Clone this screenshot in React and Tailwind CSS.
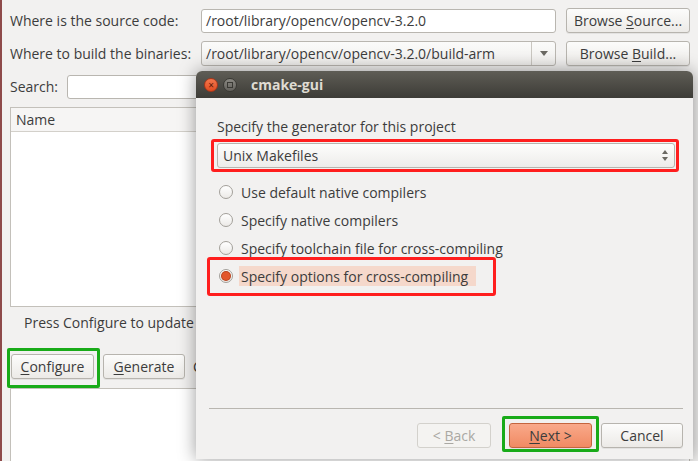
import React from 'react'

const font = { fontFamily: '"Open Sans", "Liberation Sans", Arial, sans-serif' }

function Btn({ children, className = '', disabled }) {
  return (
    <div
      className={
        'flex h-[25px] items-center justify-center whitespace-nowrap rounded-[3px] border text-[14px] ' +
        (disabled
          ? 'border-[#d3d1cc] bg-[#f4f3f1] text-[#aaa8a3] '
          : 'border-[#b7b4ae] bg-gradient-to-b from-[#fcfcfb] to-[#eceae7] text-[#3c3c3c] shadow-[0_1px_0_rgba(0,0,0,0.06)] ') +
        className
      }
    >
      {children}
    </div>
  )
}

function U({ children }) {
  return <span className="underline decoration-1 underline-offset-2">{children}</span>
}

function Radio({ checked, label, highlight }) {
  return (
    <div className="flex h-[28px] items-center">
      <div className="ml-[10px] flex h-[14px] w-[14px] items-center justify-center rounded-full border border-[#a3a09a] bg-gradient-to-b from-white to-[#eceae7]">
        {checked && <div className="h-[8px] w-[8px] rounded-full bg-[#e2562b] shadow-[0_0_0_1px_#b9431d]" />}
      </div>
      <div
        className={
          'ml-[6px] flex h-[20px] items-center whitespace-nowrap pl-[2px] pr-[8px] text-[14px] text-[#3c3c3c] ' +
          (highlight ? 'bg-[#f5d8cb]' : '')
        }
      >
        {label}
      </div>
    </div>
  )
}

export default function App() {
  return (
    <div
      className="relative h-[461px] w-[698px] overflow-hidden border-l-2 border-[#8e4a4a] bg-[#f2f1f0] text-[#3c3c3c]"
      style={font}
    >
      {/* main window */}
      <div className="flex flex-col pl-[8px] pr-[8px] pt-[8px]">
        <div className="flex h-[25px] items-center">
          <div className="w-[191px] whitespace-nowrap text-[14px]">Where is the source code:</div>
          <div className="flex h-[24px] w-[355px] items-center whitespace-nowrap rounded-[3px] border border-[#b9b6b0] bg-white pl-[4px] text-[14px]">
            /root/library/opencv/opencv-3.2.0
          </div>
          <Btn className="ml-[10px] w-[124px]">
            Browse&nbsp;<U>S</U>ource...
          </Btn>
        </div>
        <div className="mt-[8px] flex h-[25px] items-center">
          <div className="w-[191px] whitespace-nowrap text-[14px]">Where to build the binaries:</div>
          <div className="flex h-[25px] w-[355px] items-center rounded-[3px] border border-[#b9b6b0] bg-gradient-to-b from-[#fbfbfa] to-[#efeeec]">
            <div className="flex-1 whitespace-nowrap pl-[4px] text-[14px]">/root/library/opencv/opencv-3.2.0/build-arm</div>
            <div className="flex h-full w-[24px] items-center justify-center border-l border-[#c9c6c0]">
              <div className="h-0 w-0 border-x-[4px] border-t-[5px] border-x-transparent border-t-[#6b6963]" />
            </div>
          </div>
          <Btn className="ml-[10px] w-[124px]">
            Browse&nbsp;<U>B</U>uild...
          </Btn>
        </div>
        <div className="mt-[8px] flex h-[25px] items-center">
          <div className="w-[57px] text-[14px]">Search:</div>
          <div className="h-[24px] flex-1 rounded-[3px] border border-[#b9b6b0] bg-white" />
        </div>
        <div className="mt-[8px] flex h-[200px] flex-col border border-[#c3c0ba] bg-white">
          <div className="flex h-[24px] items-center border-b border-[#d3d0ca] bg-[#f6f5f4] pl-[5px] text-[14px]">
            Name
          </div>
        </div>
        <div className="mt-[6px] w-[440px] overflow-hidden whitespace-nowrap pl-[14px] text-[14px] leading-[20px]">
          Press Configure to update and display new values in red, then press Generate
        </div>
        <div className="mt-[21px] flex h-[25px] items-center">
          <Btn className="ml-[1px] w-[83px]">
            <U>C</U>onfigure
          </Btn>
          <Btn className="ml-[9px] w-[82px]">
            <U>G</U>enerate
          </Btn>
          <div className="ml-[8px] whitespace-nowrap text-[14px]">Current Generator: None</div>
        </div>
        <div className="mt-[9px] h-[80px] border border-[#c3c0ba] bg-white" />
      </div>

      {/* annotation: Configure */}
      <div className="absolute left-[5px] top-[348px] h-[40px] w-[93px] rounded-[2px] border-[3px] border-[#19ab19]" />

      {/* dialog window */}
      <div className="absolute left-[194px] top-[71px] flex h-[388px] w-[497px] flex-col overflow-hidden rounded-t-[6px] bg-[#f2f1f0] shadow-[0_0_18px_rgba(0,0,0,0.4)]">
        <div className="flex h-[27px] items-center bg-gradient-to-b from-[#5f5d56] to-[#3d3c37]">
          <div className="ml-[8px] flex h-[14px] w-[14px] items-center justify-center rounded-full border border-[#a8361a] bg-gradient-to-b from-[#f3764c] to-[#e04c1f] text-[10px] leading-none text-[#5a1a08]">
            ×
          </div>
          <div className="ml-[5px] flex h-[14px] w-[14px] items-center justify-center rounded-full border border-[#3a3934] bg-gradient-to-b from-[#8a8882] to-[#64625d]">
            <div className="h-[6px] w-[6px] border border-[#3a3934]" />
          </div>
          <div className="ml-[14px] text-[14px] font-bold text-[#dfdbd2]">cmake-gui</div>
        </div>
        <div className="flex flex-1 flex-col pl-[13px] pr-[10px]">
          <div className="mt-[19px] pl-[8px] text-[14px] leading-[20px]">Specify the generator for this project</div>
          <div className="ml-[8px] mr-[8px] mt-[6px] flex h-[25px] items-center rounded-[3px] border border-[#b7b4ae] bg-gradient-to-b from-[#fdfdfc] to-[#edecea] pl-[5px] pr-[6px]">
            <div className="flex-1 text-[14px]">Unix Makefiles</div>
            <div className="flex flex-col gap-[3px]">
              <div className="h-0 w-0 border-x-[3px] border-b-[4px] border-x-transparent border-b-[#6b6963]" />
              <div className="h-0 w-0 border-x-[3px] border-t-[4px] border-x-transparent border-t-[#6b6963]" />
            </div>
          </div>
          <div className="mt-[10px] flex flex-col">
            <Radio label="Use default native compilers" />
            <Radio label="Specify native compilers" />
            <Radio label="Specify toolchain file for cross-compiling" />
            <Radio checked highlight label="Specify options for cross-compiling" />
          </div>
          <div className="flex-1" />
          <div className="h-px bg-[#b9b6b0]" />
          <div className="mb-[11px] mt-[14px] flex items-center justify-end">
            <Btn disabled className="w-[74px]">
              &lt;&nbsp;<U>B</U>ack
            </Btn>
            <Btn className="ml-[18px] w-[83px] !border-[#c4653e] !bg-gradient-to-b !from-[#f9a98a] !to-[#f08a63] !text-[#3c3c3c]">
              <U>N</U>ext&nbsp;&gt;
            </Btn>
            <Btn className="ml-[9px] w-[82px]">Cancel</Btn>
          </div>
        </div>
      </div>

      {/* annotations on dialog */}
      <div className="absolute left-[209px] top-[139px] h-[33px] w-[468px] rounded-[3px] border-[3px] border-[#ff1e1e]" />
      <div className="absolute left-[205px] top-[257px] h-[39px] w-[289px] rounded-[3px] border-[3px] border-[#ff1e1e]" />
      <div className="absolute left-[500px] top-[416px] h-[36px] w-[97px] rounded-[2px] border-[3px] border-[#19ab19]" />
    </div>
  )
}
